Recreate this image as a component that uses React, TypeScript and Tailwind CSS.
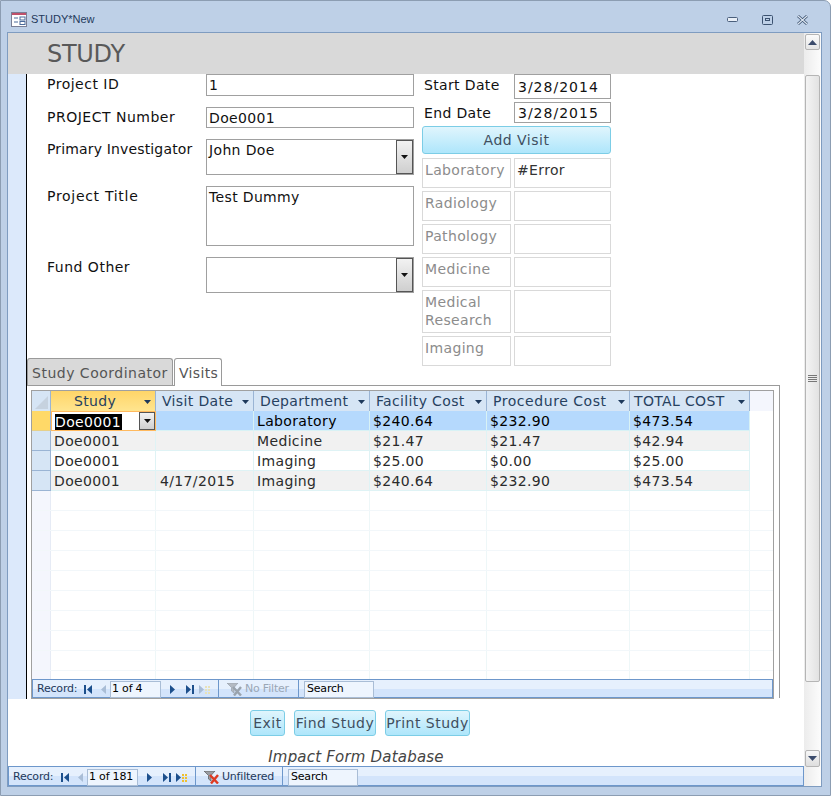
import React from "react";

const F = "font-['DejaVu_Sans',sans-serif]";
const N = "font-['DejaVu_Sans',sans-serif] text-[11px] tracking-[-0.2px]";
const NAVY = "#1c4f8c";

const Tri = ({ dir, c = NAVY }: { dir: "l" | "r"; c?: string }) => (
  <svg width="5" height="9" viewBox="0 0 5 9">
    <path d={dir === "l" ? "M5 0V9L0 4.5Z" : "M0 0V9L5 4.5Z"} fill={c} />
  </svg>
);

const Bar = ({ c = NAVY, d }: { c?: string; d: "l" | "r" }) => (
  <svg width="8" height="9" viewBox="0 0 8 9">
    {d === "l" ? (
      <>
        <rect x="0" y="0" width="2" height="9" fill={c} />
        <path d="M8 0V9L3 4.5Z" fill={c} />
      </>
    ) : (
      <>
        <path d="M0 0V9L5 4.5Z" fill={c} />
        <rect x="6" y="0" width="2" height="9" fill={c} />
      </>
    )}
  </svg>
);

const NewRec = ({ dim }: { dim?: boolean }) => (
  <svg width="13" height="9" viewBox="0 0 13 9">
    <path d="M0 0V9L5 4.5Z" fill={dim ? "#a9bdd6" : NAVY} />
    <g fill={dim ? "#e8e2b8" : "#f0c030"}>
      <rect x="6" y="1" width="2" height="2" />
      <rect x="9" y="1" width="2" height="2" />
      <rect x="6" y="4" width="2" height="2" />
      <rect x="9" y="4" width="2" height="2" />
      <rect x="6" y="7" width="2" height="2" />
      <rect x="9" y="7" width="2" height="2" />
    </g>
  </svg>
);

const Funnel = ({ dim }: { dim?: boolean }) => (
  <svg width="15" height="13" viewBox="0 0 15 13">
    <path d="M0 0H11L7 4.5V10L4.5 8V4.5Z" fill={dim ? "#b4bac2" : "#9a9da3"} stroke={dim ? "#98a1ac" : "#5a5a5a"} strokeWidth="0.7" />
    <path d="M6 4L14 12.5M14 4L7 12.5" stroke={dim ? "#9aa3ad" : "#de3a22"} strokeWidth="2.4" />
  </svg>
);

const RecordNav = ({ total, sub }: { total: string; sub?: boolean }) => (
  <div className={`flex h-full items-center bg-[linear-gradient(#e6f0fd_0%,#e6f0fd_50%,#d3e4fb_50%,#d3e4fb_100%)] pt-[2px] ${N} text-[#1e395b]`}>
    <span className={`ml-[4px] ${sub ? "w-[47px]" : "w-[48px]"}`}>Record:</span>
    <span className="flex w-[17px] justify-start"><Bar d="l" /></span>
    <span className="flex w-[9px] justify-start"><Tri dir="l" c="#a9bdd6" /></span>
    <span className="flex h-[17px] w-[51px] items-center border border-[#a9bdd6] bg-[#eef5fe] pl-[1px] text-black">1 of {total}</span>
    <span className="ml-[9px] flex w-[16px]"><Tri dir="r" /></span>
    <span className="flex w-[13px]"><Bar d="r" /></span>
    <span className="flex w-[19px]">
      <NewRec dim={sub} />
    </span>
    <span className="mt-[-2px] h-[calc(100%+2px)] w-[1px] bg-[#6d97cb]" />
    <span className="ml-[8px] flex w-[18px]"><Funnel dim={sub} /></span>
    <span className={`${sub ? "w-[53px] text-[#9aa7b6]" : "w-[60px]"}`}>{sub ? "No Filter" : "Unfiltered"}</span>
    <span className="mt-[-2px] h-[calc(100%+2px)] w-[1px] bg-[#6d97cb]" />
    <span className="ml-[5px] flex h-[17px] w-[70px] items-center border border-[#a9bdd6] bg-[#eef5fe] pl-[2px] text-black">Search</span>
  </div>
);

const Field = ({
  label,
  value,
  h,
  combo,
  mb,
  track = "tracking-[0.5px]",
}: {
  label: string;
  value: string;
  h: string;
  combo?: boolean;
  mb: string;
  track?: string;
}) => (
  <div className={`flex ${mb}`}>
    <div className={`w-[159px] shrink-0 text-[14px] leading-[20px] ${track} text-[#111]`}>{label}</div>
    <div className={`relative w-[208px] ${h} border border-[#a0a0a0] bg-white pl-[2px] text-[14px] leading-[20px] tracking-[0.35px] text-[#111]`}>
      {value}
      {combo && (
        <span className="absolute right-0 top-0 bottom-0 flex w-[17px] items-center justify-center border border-[#555] bg-[linear-gradient(#f2f2f2,#cfcfcf)]">
          <svg width="7" height="4" viewBox="0 0 7 4"><path d="M0 0H7L3.5 4Z" fill="#111" /></svg>
        </span>
      )}
    </div>
  </div>
);

const Stat = ({ label, h, value }: { label: string; h: string; value?: string }) => (
  <div className="flex gap-[3px]">
    <div className={`w-[89px] ${h} border border-[#d9d9d9] pl-[2px] pt-[2px] text-[14px] leading-[18px] tracking-[0.35px] text-[#8c8c8c]`}>{label}</div>
    <div className={`w-[97px] ${h} border border-[#d9d9d9] pl-[2px] pt-[2px] text-[14px] leading-[18px] tracking-[0.35px] text-[#333]`}>{value}</div>
  </div>
);

const Btn = ({ w, h, children }: { w: string; h: string; children: React.ReactNode }) => (
  <div className={`flex ${w} ${h} items-center justify-center rounded-[3px] border border-[#7ccde6] bg-[linear-gradient(#e0f5fd,#aee6fb)] text-[14px] tracking-[0.5px] text-[#3f4f5f]`}>
    {children}
  </div>
);

const cols = [
  { n: "Study", w: "w-[105px]", cls: "justify-center pr-[16px]" },
  { n: "Visit Date", w: "w-[98px]", cls: "pl-[6px]" },
  { n: "Department", w: "w-[116px]", cls: "pl-[6px]" },
  { n: "Facility Cost", w: "w-[117px]", cls: "pl-[6px]" },
  { n: "Procedure Cost", w: "w-[143px]", cls: "pl-[6px] tracking-[0.55px]" },
  { n: "TOTAL COST", w: "w-[120px]", cls: "pl-[4px] tracking-[0.7px]" },
];

const rows = [
  ["Doe0001", "", "Laboratory", "$240.64", "$232.90", "$473.54"],
  ["Doe0001", "", "Medicine", "$21.47", "$21.47", "$42.94"],
  ["Doe0001", "", "Imaging", "$25.00", "$0.00", "$25.00"],
  ["Doe0001", "4/17/2015", "Imaging", "$240.64", "$232.90", "$473.54"],
];

const Datasheet = () => (
  <div className="flex h-[288px] flex-col overflow-hidden">
    <div className="flex h-[20px] shrink-0">
      <div className="flex w-[19px] shrink-0 items-end justify-end border-r border-[#9ab4d4] bg-[#d6e5f5] pb-[2px] pr-[2px]">
        <svg width="13" height="13" viewBox="0 0 13 13"><path d="M13 0V13H0Z" fill="#c6d2df" /></svg>
      </div>
      {cols.map((c, i) => (
        <div
          key={c.n}
          className={`relative ${c.w} flex items-center border-r border-[#9ab4d4] text-[14px] tracking-[0.35px] text-[#27415f] ${c.cls} ${
            i === 0 ? "bg-[linear-gradient(#ffd568,#ffe58f)]" : "bg-[#d6e5f5]"
          }`}
        >
          {c.n}
          <svg className="absolute right-[4px] top-[9px]" width="7" height="4" viewBox="0 0 7 4"><path d="M0 0H7L3.5 4Z" fill="#1e395b" /></svg>
        </div>
      ))}
      <div className="flex-1 bg-[#f4f6fd]" />
    </div>
    {rows.map((r, ri) => (
      <div key={ri} className="flex h-[20px] shrink-0">
        <div className={`w-[19px] shrink-0 border-b border-r border-[#9ab4d4] ${ri === 0 ? "border-b-[#e6d08a] bg-[#ffd968]" : "bg-[#d6e5f5]"}`} />
        {r.map((v, i) =>
          ri === 0 && i === 0 ? (
            <div key={i} className={`relative ${cols[i].w} flex items-center border border-[#ffb95e] bg-white pl-[3px] pt-[1px] text-[14px] tracking-[0.35px]`}>
              <span className="bg-black pr-[1px] leading-[16px] text-white">{v}</span>
              <span className="absolute right-0 top-0 flex h-[18px] w-[16px] items-center justify-center border border-[#555] bg-[linear-gradient(#f2f2f2,#cfcfcf)]">
                <svg width="7" height="4" viewBox="0 0 7 4"><path d="M0 0H7L3.5 4Z" fill="#111" /></svg>
              </span>
            </div>
          ) : (
            <div
              key={i}
              className={`${cols[i].w} flex items-center border-b border-r pt-[2px] text-[14px] tracking-[0.35px] ${
                ri === 0
                  ? "border-[#d8f2f5] bg-[#b5d9fd] text-black"
                  : ri % 2 === 1
                  ? "border-[#dff3f5] bg-[#f1f1f1] text-[#2b2b2b]"
                  : "border-[#dff3f5] bg-white text-[#2b2b2b]"
              } ${i === 1 ? "pl-[4px]" : "pl-[3px]"}`}
            >
              {v}
            </div>
          )
        )}
      </div>
    ))}
    {Array.from({ length: 10 }).map((_, i) => (
      <div key={i} className="flex h-[20px] shrink-0 border-b border-[#f2f7fa]">
        <div className="w-[19px] shrink-0 border-r border-[#e6ebf5] bg-[#f4f6fd]" />
        {cols.map((c) => (
          <div key={c.n} className={`${c.w} border-r border-[#eef7f8]`} />
        ))}
      </div>
    ))}
  </div>
);

const Scrollbar = () => (
  <div className="flex w-[17px] shrink-0 flex-col bg-[linear-gradient(90deg,#ececec,#fcfcfc)]">
    <div className="mx-[1px] mt-[1px] flex h-[16px] items-center justify-center rounded-[2px] border border-[#b5b5b5] bg-[linear-gradient(#fbfbfb,#e6e6e6)]">
      <svg width="9" height="5" viewBox="0 0 9 5"><path d="M0 5H9L4.5 0Z" fill="#3c4c6c" /></svg>
    </div>
    <div className="h-[25px] w-full" />
    <div className="mx-[1px] flex h-[607px] items-center justify-center rounded-[2px] border border-[#b5b5b5] bg-[linear-gradient(90deg,#f4f4f4,#e2e2e2)]">
      <svg width="9" height="7" viewBox="0 0 9 7"><path d="M0 .5H9M0 2.5H9M0 4.5H9M0 6.5H9" stroke="#777" strokeWidth="1" /></svg>
    </div>
    <div className="flex-1" />
    <div className="mx-[1px] mb-[19px] flex h-[17px] items-center justify-center rounded-[2px] border border-[#b5b5b5] bg-[linear-gradient(#f7f7f7,#dedede)]">
      <svg width="9" height="5" viewBox="0 0 9 5"><path d="M0 0H9L4.5 5Z" fill="#3c4c6c" /></svg>
    </div>
  </div>
);

export default function App() {
  return (
    <div className={`h-[801px] w-[839px] overflow-hidden bg-white ${F}`}>
      <div className="flex h-[796px] w-[831px] flex-col rounded-tr-[7px] border border-[#8c9db2] bg-[#bed0e7] pl-[6px] pr-[8px] pb-[8px]">
        <div className="flex h-[31px] shrink-0 items-center pt-[6px] text-[12px]">
          <svg className="ml-[4px]" width="16" height="15" viewBox="0 0 16 15">
            <rect x="0.5" y="0.5" width="15" height="14" fill="#fff" stroke="#7a7f96" />
            <rect x="1" y="1" width="14" height="2" fill="#c0506a" />
            <path d="M3 6H7M3 10H7" stroke="#4a6a9a" />
            <rect x="9" y="5" width="5" height="3" fill="#fff" stroke="#4a6a9a" />
            <rect x="9" y="9.5" width="5" height="3" fill="#fff" stroke="#4a6a9a" />
          </svg>
          <span className="ml-[4px] font-['Liberation_Sans',sans-serif] text-[11px] text-[#1e395b]">STUDY*New</span>
          <div className="flex-1" />
          <svg width="11" height="6" viewBox="0 0 11 6"><rect x="0.5" y="0.5" width="10" height="4" rx="1" fill="#e9eff7" stroke="#4a5f7c" /></svg>
          <svg className="ml-[24px]" width="11" height="10" viewBox="0 0 11 10"><rect x="0.5" y="0.5" width="10" height="9" rx="1" fill="none" stroke="#3c5270" /><rect x="3.5" y="3.5" width="4" height="2" fill="none" stroke="#3c5270" /></svg>
          <svg className="ml-[24px] mr-[14px]" width="11" height="10" viewBox="0 0 11 10"><path d="M1 1L10 9M10 1L1 9" stroke="#3c5270" strokeWidth="2.8" /><path d="M1 1L10 9M10 1L1 9" stroke="#dfe8f3" strokeWidth="1.2" /></svg>
        </div>
        <div className="flex min-h-0 flex-1 border border-[#7f9cc0] bg-white">
          <div className="flex min-w-0 flex-1 flex-col">
            <div className="flex h-[41px] shrink-0 items-center bg-[#d9d9d9] pl-[39px] text-[24px] leading-none tracking-[-0.3px] text-[#595959]">STUDY</div>
            <div className="flex min-h-0 flex-1">
              <div className="h-[625px] w-[19px] shrink-0 border-r-[1.5px] border-black bg-[#dce9fb]" />
              <div className="flex min-w-0 flex-1 flex-col">
                <div className="flex h-[284px] shrink-0 pl-[20px]">
                  <div className="w-[367px]">
                    <Field label="Project ID" value="1" h="h-[22px]" mb="mb-[11px]" />
                    <Field label="PROJECT Number" value="Doe0001" h="h-[21px]" mb="mb-[11px]" />
                    <Field label="Primary Investigator" track="tracking-[0.15px]" value="John Doe" h="h-[36px]" combo mb="mb-[11px]" />
                    <Field label="Project Title" track="tracking-[0.7px]" value="Test Dummy" h="h-[60px]" mb="mb-[11px]" />
                    <Field label="Fund Other" value="" h="h-[36px]" combo mb="mb-0" />
                  </div>
                  <div className="ml-[8px] w-[189px]">
                    <div className="flex h-[28px] items-start">
                      <span className="w-[92px] pl-[2px] text-[14px] leading-[22px] tracking-[0.35px] text-[#111]">Start Date</span>
                      <span className="h-[25px] w-[97px] border border-[#a0a0a0] pl-[3px] text-[14px] leading-[24px] tracking-[1px] text-[#111]">3/28/2014</span>
                    </div>
                    <div className="flex h-[24px] items-start">
                      <span className="w-[92px] pl-[2px] text-[14px] leading-[22px] tracking-[0.35px] text-[#111]">End Date</span>
                      <span className="h-[21px] w-[97px] border border-[#a0a0a0] pl-[3px] text-[14px] leading-[21px] tracking-[1px] text-[#111]">3/28/2015</span>
                    </div>
                    <div className="mb-[4px]"><Btn w="w-[189px]" h="h-[28px]">Add Visit</Btn></div>
                    <div className="flex flex-col gap-[3px]">
                      <Stat label="Laboratory" h="h-[30px]" value="#Error" />
                      <Stat label="Radiology" h="h-[30px]" />
                      <Stat label="Pathology" h="h-[30px]" />
                      <Stat label="Medicine" h="h-[30px]" />
                      <Stat label="Medical Research" h="h-[43px]" />
                      <Stat label="Imaging" h="h-[30px]" />
                    </div>
                  </div>
                </div>
                <div className="flex h-[27px] shrink-0 items-end">
                  <div className="flex h-[27px] w-[146px] items-center rounded-t-[3px] border border-b-0 border-[#9a9a9a] bg-[#d9d9d9] pl-[4px] pt-[2px] text-[14px] tracking-[0.5px] text-[#555]">Study Coordinator</div>
                  <div className="relative z-10 ml-[1px] mb-[-1px] flex h-[28px] w-[48px] items-center rounded-t-[3px] border border-b-0 border-[#9a9a9a] bg-white pl-[4px] pt-[1px] text-[14px] tracking-[0.35px] text-[#555]">Visits</div>
                </div>
                <div className="h-[313px] w-[753px] shrink-0 border-r border-t border-[#9a9a9a] pl-[4px] pr-[5px] pt-[4px]">
                  <div className="h-[309px] w-[743px] border border-b-2 border-[#a0a0a0]">
                    <Datasheet />
                    <div className="h-[19px] border border-[#6d97cb]"><RecordNav total="4" sub /></div>
                  </div>
                </div>
                <div className="flex shrink-0 gap-[9px] pl-[223px] pt-[12px]">
                  <Btn w="w-[35px]" h="h-[26px]">Exit</Btn>
                  <Btn w="w-[82px]" h="h-[26px]">Find Study</Btn>
                  <Btn w="w-[85px]" h="h-[26px]">Print Study</Btn>
                </div>
              </div>
            </div>
            <div className="flex h-[18px] shrink-0 items-center justify-center text-[15px] italic text-[#444]">
              <span className="ml-[-100px] tracking-[0.2px]">Impact Form Database</span>
            </div>
            <div className="h-[20px] shrink-0 border border-[#6d97cb]"><RecordNav total="181" /></div>
          </div>
          <Scrollbar />
        </div>
      </div>
    </div>
  );
}
